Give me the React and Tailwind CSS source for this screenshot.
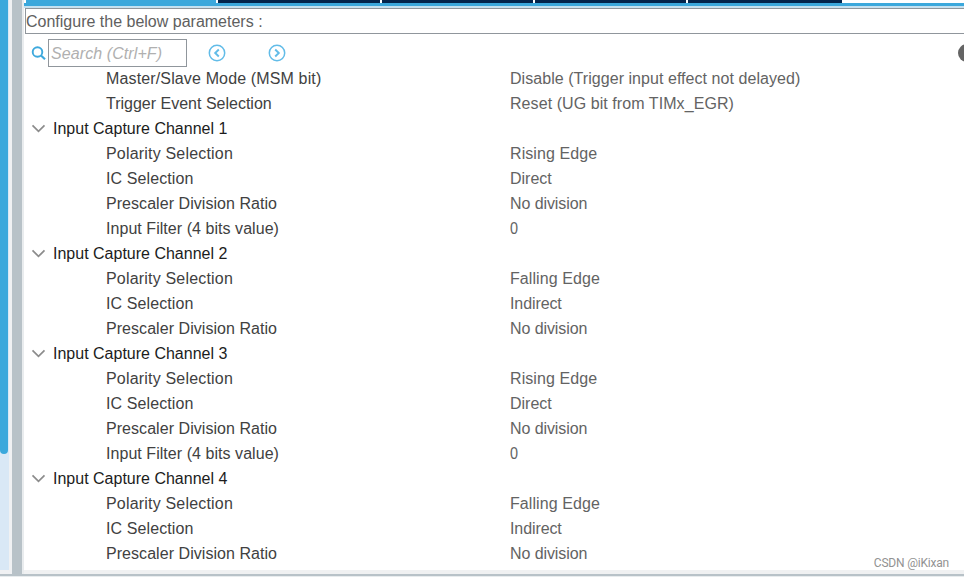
const groups = [
  {
    title: null,
    params: [
      ["Master/Slave Mode (MSM bit)", "Disable (Trigger input effect not delayed)"],
      ["Trigger Event Selection", "Reset (UG bit from TIMx_EGR)"],
    ],
  },
  {
    title: "Input Capture Channel 1",
    params: [
      ["Polarity Selection", "Rising Edge"],
      ["IC Selection", "Direct"],
      ["Prescaler Division Ratio", "No division"],
      ["Input Filter (4 bits value)", "0"],
    ],
  },
  {
    title: "Input Capture Channel 2",
    params: [
      ["Polarity Selection", "Falling Edge"],
      ["IC Selection", "Indirect"],
      ["Prescaler Division Ratio", "No division"],
    ],
  },
  {
    title: "Input Capture Channel 3",
    params: [
      ["Polarity Selection", "Rising Edge"],
      ["IC Selection", "Direct"],
      ["Prescaler Division Ratio", "No division"],
      ["Input Filter (4 bits value)", "0"],
    ],
  },
  {
    title: "Input Capture Channel 4",
    params: [
      ["Polarity Selection", "Falling Edge"],
      ["IC Selection", "Indirect"],
      ["Prescaler Division Ratio", "No division"],
    ],
  },
];

// labels that need a slightly different letter spacing
const tracking = {
  "Master/Slave Mode (MSM bit)": "tracking-[0.14px]",
  "Polarity Selection": "tracking-[0.19px]",
  "IC Selection": "tracking-[0.1px]",
  "Prescaler Division Ratio": "tracking-[0.05px]",
  "Input Filter (4 bits value)": "tracking-[0.05px]",
  "Disable (Trigger input effect not delayed)": "tracking-[0.05px]",
  "Reset (UG bit from TIMx_EGR)": "tracking-[0.07px]",
  "Rising Edge": "tracking-[0.08px]",
  "Falling Edge": "tracking-[0.08px]",
  "No division": "tracking-[-0.08px]",
  "Indirect": "tracking-[-0.1px]",
};

function SearchIcon() {
  return (
    <svg className="h-4 w-4" viewBox="0 0 16 16" fill="none" stroke="#3ea9dd" strokeWidth="1.9">
      <circle cx="6.5" cy="7" r="4.8" />
      <path d="M10 10.5 L14 14.2" strokeWidth="2.2" />
    </svg>
  );
}

function ArrowButton({ d }) {
  return (
    <button className="h-[18px] w-[18px]">
      <svg className="h-[18px] w-[18px]" viewBox="0 0 18 18" fill="none" stroke="#62bce8" strokeWidth="1.5">
        <circle cx="9" cy="9" r="7.7" />
        <path d={d} strokeWidth="1.9" />
      </svg>
    </button>
  );
}

function Group({ title, params }) {
  return (
    <div>
      {title && (
        <div className="flex h-[25px] items-center pl-[7px] text-[#1c1c1c]">
          <svg className="mr-[7px] h-4 w-[15px]" viewBox="0 0 15 16" fill="none" stroke="#8c8c8c" strokeWidth="1.7">
            <path d="M1.5 4.4 L7.5 10.4 L13.5 4.4" />
          </svg>
          <span>{title}</span>
        </div>
      )}
      {params.map(([name, value]) => (
        <div key={name} className="flex h-[25px] items-center pl-[82px]">
          <span className={`w-[404px] text-[#414141] ${tracking[name] || ""}`}>{name}</span>
          {value === "0" ? (
            <span className="inline-block origin-left scale-x-90 text-[#636363]">{value}</span>
          ) : (
            <span className={`text-[#636363] ${tracking[value] || ""}`}>{value}</span>
          )}
        </div>
      ))}
    </div>
  );
}

function App() {
  return (
    <div className="relative flex h-[577px] w-[964px] flex-col overflow-hidden bg-white font-['Liberation_Sans',Arial,sans-serif] text-base leading-[25px] whitespace-nowrap">
      <div className="flex h-[574px]">
        {/* scrollbar and splitter */}
        <div className="h-full w-[9px] border-b-4 border-[#f0f1f3] bg-[#d9e8f6]">
          <div className="h-[454px] w-[8px] rounded-b-[4px] bg-[#3ba8dc]"></div>
        </div>
        <div className="w-[3px] bg-[#f0f1f3]"></div>
        <div className="w-[10px] bg-[#b8c2c8]"></div>
        <div className="w-[2px] bg-[#e9ecee]"></div>

        <div className="flex flex-1 flex-col">
          {/* tabs */}
          <div className="flex h-[3px] gap-[2px] pl-[2px]">
            <div className="w-[190px] bg-[#3ba8dc]"></div>
            <div className="w-[162px] bg-[#03244b]"></div>
            <div className="w-[151px] bg-[#03244b]"></div>
            <div className="w-[151px] bg-[#03244b]"></div>
            <div className="w-[154px] bg-[#03244b]"></div>
          </div>
          <div className="h-[3px] bg-[#3ba8dc]"></div>
          <div className="h-[2px] bg-[#c5e1f0]"></div>

          <div className="mr-[-2px] ml-px flex h-[26px] items-center border border-[#90969c] text-[#606060]">
            Configure the below parameters :
          </div>

          {/* search row */}
          <div className="flex h-8 items-center pt-[5px] pl-[7px]">
            <SearchIcon />
            <div className="ml-px h-[28px] w-[139px] border border-[#90969c] pl-[2px] leading-[27px] tracking-[0.09px] text-[#b0b0b0] italic">
              Search (Ctrl+F)
            </div>
            <div className="ml-[21px] flex gap-[42px]">
              <ArrowButton d="M10.8 5.5 L7.2 9 L10.8 12.5" />
              <ArrowButton d="M7.2 5.5 L10.8 9 L7.2 12.5" />
            </div>
            <div className="mr-[-12px] ml-auto h-[18px] w-[18px] rounded-full bg-[#646464]"></div>
          </div>

          <div className="flex-1">
            {groups.map((group, index) => (
              <Group key={index} {...group} />
            ))}
          </div>
          <div className="h-[4px] bg-[#f0f1f2]"></div>
        </div>
      </div>
      <div className="h-[2px] bg-[#b8c2c8]"></div>
      <div className="h-px bg-[#e8ecee]"></div>

      <span className="absolute top-[556px] right-[15px] font-[Roboto,sans-serif] text-[12px] leading-[14px] tracking-[-0.2px] text-[#929292]">CSDN @iKixan</span>
    </div>
  );
}

export default App;
